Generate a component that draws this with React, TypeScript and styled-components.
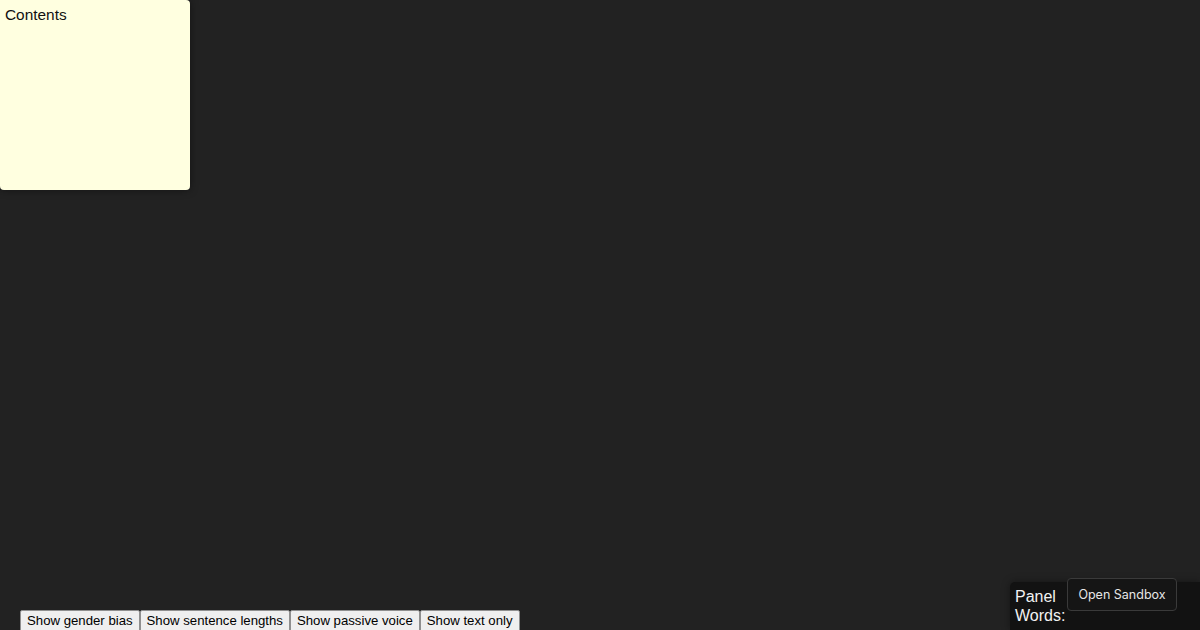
import styled, { createGlobalStyle } from 'styled-components';

const GlobalStyle = createGlobalStyle`
  html, body {
    margin: 0;
    padding: 0;
    height: 100%;
    background: #222222;
    font-family: "Liberation Sans", Arial, sans-serif;
    overflow: hidden;
  }
  #root {
    height: 100%;
  }
`;

const Page = styled.div`
  height: 630px;
  display: flex;
  flex-direction: column;
  justify-content: space-between;
`;

const Contents = styled.div`
  width: 185px;
  height: 184px;
  padding: 6px 0 0 5px;
  background: #ffffe0;
  color: #111;
  font-size: 15.4px;
  border-radius: 0 4px 4px 4px;
  box-shadow: 0 0 8px rgba(0, 0, 0, 0.45);
`;

const BottomRow = styled.div`
  display: flex;
  justify-content: space-between;
  align-items: flex-end;
`;

const Toolbar = styled.div`
  display: flex;
  margin-left: 20px;
  margin-bottom: -1px;
`;

const ToolButton = styled.button`
  font-family: "Liberation Sans", Arial, sans-serif;
  font-size: 13.2px;
  height: 21px;
  padding: 1px 6px;
  background: #efefef;
  color: #000;
  border: 1px solid #8f8f8f;
  border-radius: 2px 2px 0 0;
  cursor: pointer;
`;

const Panel = styled.div`
  width: 185px;
  height: 43px;
  padding: 5px 0 0 5px;
  background: #121212;
  color: #f2f2f2;
  font-size: 16px;
  line-height: 19px;
  border-top-left-radius: 5px;
  box-shadow: 0 0 8px rgba(0, 0, 0, 0.4);
`;

const SandboxButton = styled.button`
  position: fixed;
  right: 23px;
  bottom: 19px;
  width: 110px;
  height: 33px;
  background: #151515;
  color: #e6e6e6;
  border: 1px solid #3a3a3a;
  border-radius: 4px;
  font-family: Inter, "Liberation Sans", sans-serif;
  font-size: 12.5px;
  padding: 0;
`;

const modes = ['Show gender bias', 'Show sentence lengths', 'Show passive voice', 'Show text only'];

const App = () => {
  return (
    <Page>
      <GlobalStyle />
      <Contents>Contents</Contents>
      <BottomRow>
        <Toolbar>
          {modes.map((m) => (
            <ToolButton key={m}>{m}</ToolButton>
          ))}
        </Toolbar>
        <Panel>
          Panel
          <br />
          Words:
        </Panel>
      </BottomRow>
      <SandboxButton>Open Sandbox</SandboxButton>
    </Page>
  );
};

export default App;
